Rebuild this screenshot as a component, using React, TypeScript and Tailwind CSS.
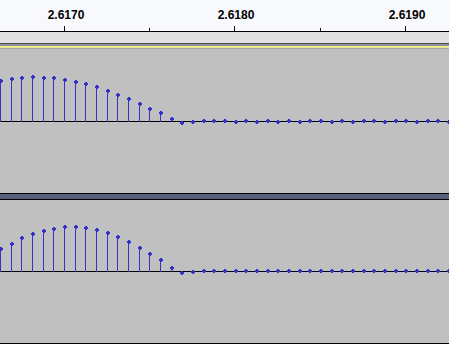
const SPACING = 10.667;

// sample heights above the zero line, in px
const left = [40, 42, 43, 44, 43, 43, 41, 39, 37, 34, 30, 26, 22, 17, 12, 8, 2, -2, -1, 0, 0, 0, -1, 0, -1, 0, -1, 0, -1, 0, 0, -1, 0, -1, 0, 0, -1, 0, 0, -1, 0, 0, -1];
const right = [22, 27, 33, 37, 40, 42, 44, 44, 43, 41, 38, 34, 29, 23, 17, 11, 3, -2, -1, 0, 0, 0, 0, 0, 0, 0, 0, 0, 0, 0, 0, 0, 0, 0, 0, 0, 0, 0, 0, 0, 0, 0, 0];

const ticks = [
  { x: 64, label: "2.6170" },
  { x: 234, label: "2.6180" },
  { x: 405, label: "2.6190" },
];
const minor = [149, 320];

function Ruler() {
  return (
    <div className="relative h-[32px] bg-[#f8f9fc] border-b border-black">
      {ticks.map((t) => (
        <div key={t.label}>
          <span className="absolute top-[8px] w-[60px] text-center text-[12px] font-bold leading-[14px] text-black" style={{ left: t.x - 28 }}>
            {t.label}
          </span>
          <div className="absolute top-[26px] w-px h-[5px] bg-black" style={{ left: t.x }} />
        </div>
      ))}
      {minor.map((x) => (
        <div key={x} className="absolute top-[28px] w-px h-[3px] bg-black" style={{ left: x }} />
      ))}
    </div>
  );
}

function Track({ samples, height, zero }: { samples: number[]; height: number; zero: number }) {
  return (
    <div className="bg-[#c0c0c0]" style={{ height }}>
      <svg width={449} height={height} shapeRendering="crispEdges" className="block">
        <rect x={0} y={zero} width={449} height={1} fill="#000" />
        {samples.map((h, i) => {
          const x = Math.round(i * SPACING);
          const y = zero - h;
          const top = Math.min(y, zero);
          return (
            <g key={i} fill="#3232c8">
              {h !== 0 && <rect x={x} y={top} width={1} height={Math.abs(h) + 1} />}
              <rect x={x} y={y - 2} width={2} height={4} />
              <rect x={x - 1} y={y - 1} width={4} height={2} />
            </g>
          );
        })}
      </svg>
    </div>
  );
}

export default function App() {
  return (
    <div className="w-[449px] h-[344px] overflow-hidden flex flex-col font-['Liberation_Sans',Arial,sans-serif]">
      <Ruler />
      <div className="h-[11px] bg-[#e0e0e0]" />
      <div className="h-px bg-[#4c4c4c]" />
      <div className="h-[2px] bg-[#8e8ea6]" />
      <div className="h-px bg-[#f4f46a]" />
      <div className="h-px bg-[#e4e0a4]" />
      <div className="h-px bg-[#a6a6a6]" />
      <Track samples={left} height={144} zero={72} />
      <div className="h-px bg-black" />
      <div className="h-[5px] bg-[#5c6080]" />
      <div className="h-px bg-black" />
      <Track samples={right} height={143} zero={71} />
      <div className="h-px bg-black" />
    </div>
  );
}
